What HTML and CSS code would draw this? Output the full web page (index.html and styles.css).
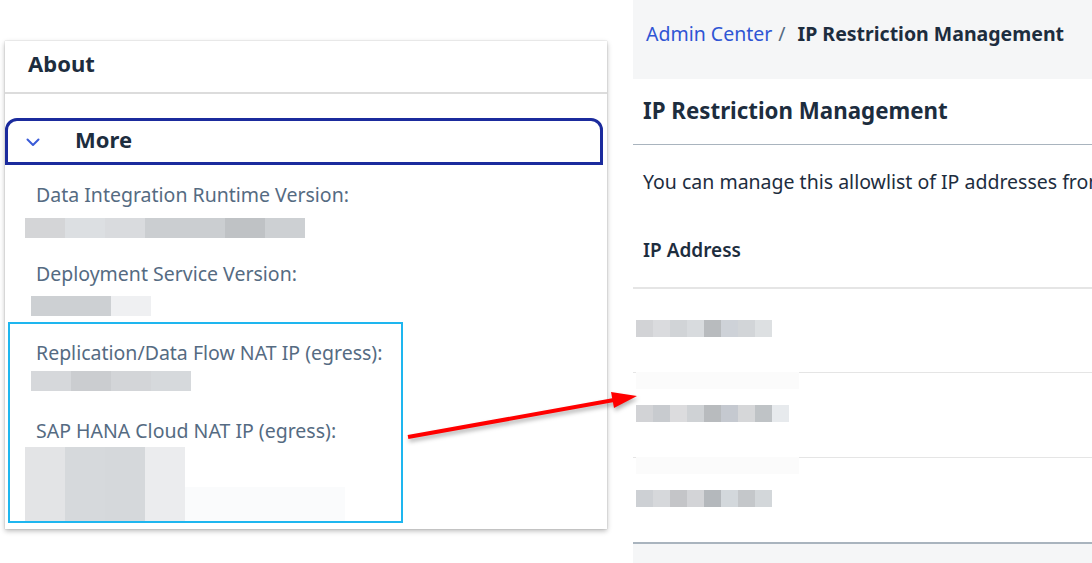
FILE: index.html
```html
<!DOCTYPE html>
<html lang="en">
<head>
<meta charset="utf-8">
<title>About / IP Restriction Management</title>
<link rel="stylesheet" href="styles.css">
</head>
<body>
<div class="page">
  <section class="about-card">
    <header class="about-head">About</header>
    <div class="about-body">
      <div class="more-toggle">
        <svg class="chev" width="14" height="9" viewBox="0 0 14 9"><path d="M1.5 1.5 L7 7 L12.5 1.5" fill="none" stroke="#3a5bd8" stroke-width="2" stroke-linecap="round" stroke-linejoin="round"/></svg>
        <span class="more-label">More</span>
      </div>
      <div class="field f1">
        <div class="field-label">Data Integration Runtime Version:</div>
        <div class="mosaic lg inset-a">
          <span class="g1"></span><span class="g2"></span><span class="g3"></span><span class="g4 w2"></span><span class="g5"></span><span class="g6"></span>
        </div>
      </div>
      <div class="field f2">
        <div class="field-label">Deployment Service Version:</div>
        <div class="mosaic lg inset-b">
          <span class="g6 w2"></span><span class="g7"></span>
        </div>
      </div>
      <div class="field f3">
        <div class="field-label">Replication/Data Flow NAT IP (egress):</div>
        <div class="mosaic lg inset-b">
          <span class="g8"></span><span class="g9"></span><span class="g10"></span><span class="g11"></span>
        </div>
      </div>
      <div class="field f4">
        <div class="field-label">SAP HANA Cloud NAT IP (egress):</div>
        <div class="mosaic tall inset-a">
          <span class="g12"></span><span class="g13"></span><span class="g14"></span><span class="g15"></span><span class="faint w4"></span>
        </div>
      </div>
    </div>
  </section>

  <main class="ip-panel">
    <nav class="crumbs">
      <span class="crumb-link">Admin Center</span>
      <span class="crumb-sep">/</span>
      <span class="crumb-current">IP Restriction Management</span>
    </nav>
    <div class="panel-body">
      <h1 class="panel-title">IP Restriction Management</h1>
      <p class="panel-desc">You can manage this allowlist of IP addresses from which users can access the system.</p>
      <div class="ip-table">
        <div class="ip-head">IP Address</div>
        <div class="ip-row first">
          <div class="mosaic sm">
            <span class="h1"></span><span class="h2"></span><span class="h3"></span><span class="h4"></span><span class="h5"></span><span class="h6"></span><span class="h7"></span><span class="h8"></span>
          </div>
        </div>
        <div class="ip-row">
          <div class="ghost"></div>
          <div class="mosaic sm">
            <span class="h1"></span><span class="h9"></span><span class="h10"></span><span class="h11"></span><span class="h5"></span><span class="h12"></span><span class="h13"></span><span class="h14"></span><span class="h15"></span>
          </div>
        </div>
        <div class="ip-row">
          <div class="ghost"></div>
          <div class="mosaic sm">
            <span class="h16"></span><span class="h17"></span><span class="h18"></span><span class="h19"></span><span class="h20"></span><span class="h21"></span><span class="h22"></span><span class="h23"></span>
          </div>
        </div>
      </div>
      <div class="panel-foot"></div>
    </div>
  </main>
</div>

<div class="highlight-box"></div>
<svg class="arrow" width="1092" height="563" viewBox="0 0 1092 563">
  <line x1="408" y1="437" x2="614" y2="400" stroke="#ff0000" stroke-width="4"/>
  <polygon points="637,396 611,392 614,408" fill="#ff0000"/>
</svg>
</body>
</html>
```

FILE: styles.css
```css
* { box-sizing: border-box; }

html, body {
  margin: 0;
  padding: 0;
  background: #ffffff;
  font-family: "Noto Sans", "Open Sans", sans-serif;
  color: #1d2d3e;
  overflow: hidden;
}

body {
  position: relative;
  width: 1092px;
  height: 563px;
}

.page {
  display: flex;
  align-items: flex-start;
  height: 563px;
}

/* ---------- Left: About card ---------- */
.about-card {
  flex: 0 0 602px;
  height: 488px;
  margin: 41px 26px 0 5px;
  background: #ffffff;
  box-shadow: 0 2px 5px rgba(0, 0, 0, 0.28), 0 0 1px rgba(0, 0, 0, 0.25);
  overflow: hidden;
}

.about-head {
  height: 53px;
  padding: 0 0 8px 23px;
  display: flex;
  align-items: center;
  font-size: 22px;
  font-weight: 700;
  color: #1d2d3e;
  border-bottom: 2px solid #dcdcdc;
}

.about-body {
  padding: 24px 4px 0 0;
}

.more-toggle {
  height: 47px;
  display: flex;
  align-items: center;
  padding-left: 18px;
  border: 3px solid #1b2b9d;
  border-radius: 12px 12px 0 0;
}

.chev { display: block; margin-top: 1px; }

.more-label {
  margin-left: 35px;
  margin-bottom: 6px;
  font-size: 22px;
  line-height: 28px;
  font-weight: 700;
  color: #1d2d3e;
}

.field-label {
  padding-left: 31px;
  font-size: 19.5px;
  line-height: 24px;
  color: #556b82;
}

.field.f1 { margin-top: 18px; }
.field.f2 { margin-top: 24px; }
.field.f3 { margin-top: 25px; }
.field.f4 { margin-top: 28px; }

.f1 .mosaic { margin-top: 11px; }
.f2 .mosaic { margin-top: 10px; }
.f3 .mosaic { margin-top: 6px; }
.f4 .mosaic { margin-top: 4px; }

/* pixelated redaction blocks */
.mosaic { display: flex; align-items: flex-end; }
.mosaic span { display: block; }
.mosaic.lg span { width: 40px; height: 20px; }
.mosaic.lg span.w2 { width: 80px; }
.mosaic.tall span { width: 40px; height: 76px; }
.mosaic.tall span.faint { width: 160px; height: 36px; background: #fafbfc; }
.inset-a { margin-left: 20px; }
.inset-b { margin-left: 26px; }

.g1 { background: #d4d5d7; }
.g2 { background: #dcdfe2; }
.g3 { background: #d9dbde; }
.g4 { background: #cbced1; }
.g5 { background: #bfc2c5; }
.g6 { background: #cdd0d3; }
.g7 { background: #eff0f2; }
.g8 { background: #d6d8db; }
.g9 { background: #cbcdd0; }
.g10 { background: #d3d5d8; }
.g11 { background: #d6d9dc; }
.g12 { background: #e3e4e6; }
.g13 { background: #d6d9dc; }
.g14 { background: #d5d8db; }
.g15 { background: #ebecee; }

/* ---------- Right: IP restriction panel ---------- */
.ip-panel {
  flex: 1 1 auto;
  min-width: 0;
  height: 563px;
  overflow: hidden;
  background: #ffffff;
}

.crumbs {
  height: 79px;
  background: #f5f6f7;
  display: flex;
  align-items: center;
  padding: 0 0 12px 13px;
  white-space: nowrap;
  font-size: 19.5px;
}

.crumb-link { color: #2f55d4; }
.crumb-sep { color: #556b82; margin: 0 12px 0 6px; }
.crumb-current { font-weight: 700; color: #1d2d3e; }

.panel-body { white-space: nowrap; }

.panel-title {
  margin: 0;
  padding: 18px 0 19px 10px;
  font-size: 22.3px;
  line-height: 28px;
  font-weight: 700;
  color: #1d2d3e;
  border-bottom: 1px solid #a9b4be;
}

.panel-desc {
  margin: 25px 0 0;
  padding-left: 10px;
  font-size: 19.5px;
  line-height: 24px;
  color: #1d2d3e;
}

.ip-head {
  margin-top: 44px;
  padding: 0 0 25px 10px;
  font-size: 19px;
  line-height: 24px;
  font-weight: 600;
  color: #1d2d3e;
  border-bottom: 2px solid #e5e5e5;
}

.ip-row {
  height: 85px;
  border-top: 1px solid #e5e5e5;
  padding-left: 3px;
}

.ip-row.first {
  height: 83px;
  border-top: 0;
  padding-top: 31px;
}

.ghost {
  width: 163px;
  height: 17px;
  margin-top: -1px;
  background: #fbfbfb;
}

.ip-row .ghost + .mosaic { margin-top: 16px; }

.mosaic.sm span { width: 17px; height: 17px; }

.h1 { background: #d2d3d6; }
.h2 { background: #dadbde; }
.h3 { background: #d1d4d7; }
.h4 { background: #d8dbde; }
.h5 { background: #b8bbbe; }
.h6 { background: #ced2d8; }
.h7 { background: #d2d5d8; }
.h8 { background: #dde0e2; }
.h9 { background: #c8cbcf; }
.h10 { background: #dcdcde; }
.h11 { background: #cfd2d5; }
.h12 { background: #c5c9d0; }
.h13 { background: #d6d7d9; }
.h14 { background: #bfc3c6; }
.h15 { background: #e7eaed; }
.h16 { background: #cdd0d4; }
.h17 { background: #d6d8db; }
.h18 { background: #c4c5c8; }
.h19 { background: #d3d4d7; }
.h20 { background: #b4b8bc; }
.h21 { background: #d3d8dc; }
.h22 { background: #c4c7ca; }
.h23 { background: #d3d7da; }

.panel-foot {
  height: 30px;
  border-top: 2px solid #a9b4be;
  background: #f5f6f7;
}

/* ---------- Annotation overlays ---------- */
.highlight-box {
  position: absolute;
  left: 8px;
  top: 322px;
  width: 395px;
  height: 201px;
  border: 2px solid #1eb6ef;
  pointer-events: none;
}

.arrow {
  position: absolute;
  left: 0;
  top: 0;
  pointer-events: none;
  filter: drop-shadow(1px 3px 2px rgba(0, 0, 0, 0.3));
}
```
